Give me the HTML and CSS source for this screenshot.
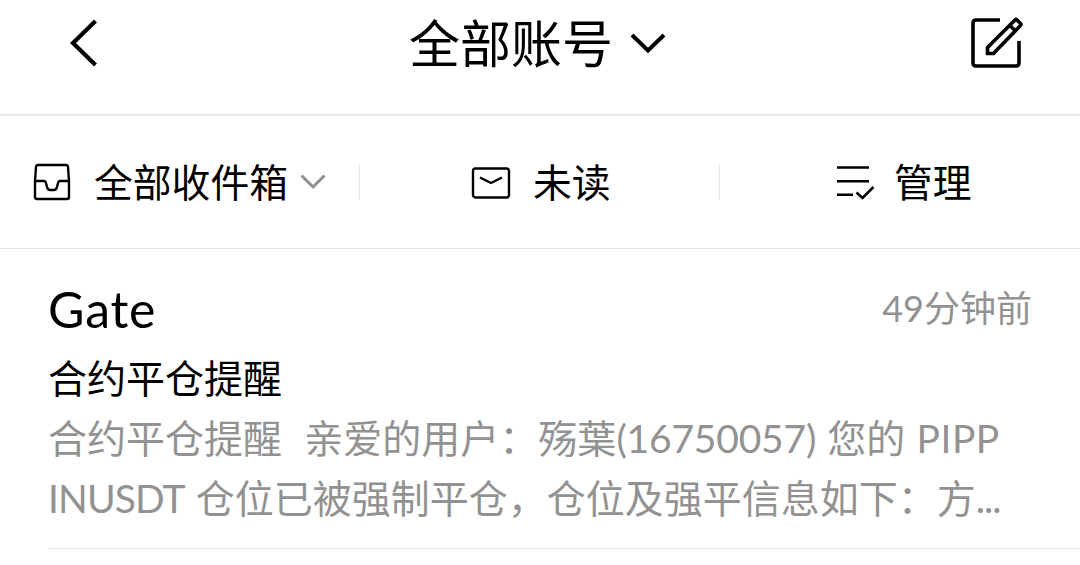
FILE: index.html
```html
<!DOCTYPE html>
<html lang="zh-CN">
<head>
    <meta charset="UTF-8">
    <meta name="viewport" content="width=device-width, initial-scale=1.0">
    <title>全部账号</title>
    <link rel="stylesheet" href="styles.css">
</head>
<body>
    <header class="header">
        <svg class="back-icon" viewBox="0 0 32 52">
            <path d="M28.5 4 L6 26 L28.5 48"/>
        </svg>
        <div class="account">
            <h1>全部账号</h1>
            <svg class="account-arrow" viewBox="0 0 38 24">
                <path d="M3 4 L19 19.5 L35 4"/>
            </svg>
        </div>
        <svg class="compose-icon" viewBox="0 0 56 56">
            <path d="M31 5 H7 Q4 5 4 8 V48 Q4 51 7 51 H47 Q50 51 50 48 V26"/>
            <path d="M18.500 38.500 V32.500 L46 5 Q47 4 48 5 L51.500 8.500 Q52.500 9.500 51.500 10.500 L24.500 38.500 Z M41 10.500 L46.500 16"/>
        </svg>
    </header>

    <nav class="toolbar">
        <div class="tool tool-inbox">
            <svg class="inbox-icon" viewBox="0 0 38 38">
                <path d="M5 2 H33 Q34.800 2 35 4 L36 18 V34 Q36 36 34 36 H4 Q2 36 2 34 V18 L3 4 Q3.200 2 5 2 Z M2 18 H11 Q12.500 18 13 20 L14 24 Q14.800 27 17 27 H21 Q23.200 27 24 24 L25 20 Q25.500 18 27 18 H36"/>
            </svg>
            <span>全部收件箱</span>
            <svg class="inbox-arrow" viewBox="0 0 26 18">
                <path d="M1.500 2.500 L13 14 L24.500 2.500"/>
            </svg>
        </div>
        <div class="tool tool-unread">
            <svg class="unread-icon" viewBox="0 0 40 34">
                <rect x="2" y="3.500" width="36" height="29" rx="2.500"/>
                <path d="M9 12.500 L20 18 L31 12.500"/>
            </svg>
            <span>未读</span>
        </div>
        <div class="tool tool-manage">
            <svg class="manage-icon" viewBox="0 0 38 36">
                <path d="M0 3.500 H32 M0 17.200 H32 M0 30.800 H16 M19.500 28.500 L25.500 34 L36.500 23"/>
            </svg>
            <span>管理</span>
        </div>
    </nav>

    <main class="mail-list">
        <article class="mail">
            <div class="mail-top">
                <h2 class="sender">Gate</h2>
                <time class="time">49分钟前</time>
            </div>
            <div class="subject">合约平仓提醒</div>
            <div class="preview">
                <p>合约平仓提醒&nbsp; 亲爱的用户：殇葉<span class="uid">(16750057)</span> 您的 <span class="pair">PIPP</span></p>
                <p><span class="symbol">INUSDT</span> 仓位已被强制平仓，仓位及强平信息如下：方<span class="dots">...</span></p>
            </div>
        </article>
    </main>
</body>
</html>
```

FILE: styles.css
```css
* {
    margin: 0;
    padding: 0;
    box-sizing: border-box;
}

body {
    font-family: Lato, 'Noto Sans CJK SC', sans-serif;
    background: #fff;
    color: #000;
    overflow: hidden;
}

svg {
    display: block;
    flex: none;
    fill: none;
    stroke: #000;
}

.header {
    height: 116px;
    padding: 0 55px 28px 67px;
    border-bottom: 2px solid #e9e9e9;
    display: flex;
    align-items: center;
    justify-content: space-between;
}

.back-icon {
    width: 32px;
    height: 52px;
    stroke-width: 4.2;
}

.account {
    padding-left: 8px;
    display: flex;
    align-items: center;
    gap: 16px;
}

.account h1 {
    padding-top: 2px;
    font-size: 51px;
    font-weight: 400;
    line-height: 74px;
}

.account-arrow {
    width: 38px;
    height: 24px;
    stroke-width: 4;
}

.compose-icon {
    width: 56px;
    height: 56px;
    stroke-width: 3.6;
}

.toolbar {
    height: 133px;
    border-bottom: 1px solid #e6e6e6;
    display: grid;
    grid-template-columns: repeat(3, 1fr);
    align-items: center;
    font-size: 38.8px;
    line-height: 56px;
}

.tool {
    height: 36px;
    display: flex;
    align-items: center;
    border-right: 1px solid #e6e6e6;
}

.tool:last-child {
    border-right: none;
}

.tool-inbox {
    padding-left: 33px;
}

.inbox-icon {
    width: 38px;
    height: 38px;
    margin-right: 23px;
    stroke-width: 2.4;
}

.inbox-arrow {
    width: 26px;
    height: 18px;
    margin-left: 12px;
    stroke: #8f8f8f;
    stroke-width: 3;
}

.tool-unread {
    padding-left: 111px;
}

.unread-icon {
    width: 40px;
    height: 34px;
    margin-right: 22px;
    stroke-width: 2.4;
}

.tool-manage {
    padding-left: 117px;
}

.manage-icon {
    width: 38px;
    height: 36px;
    margin-right: 19px;
    stroke-width: 2.6;
}

.mail {
    height: 300px;
    margin-left: 48px;
    padding-top: 24px;
    border-bottom: 1px solid #e6e6e6;
}

.mail-top {
    height: 75px;
    padding-right: 48px;
    display: flex;
    align-items: flex-start;
    justify-content: space-between;
}

.sender {
    font-size: 50px;
    font-weight: 400;
    line-height: 72px;
    letter-spacing: 0.8px;
}

.time {
    padding-top: 9px;
    color: #929292;
    font-size: 36px;
    line-height: 52px;
}

.subject {
    font-size: 39px;
    line-height: 60px;
}

.preview {
    color: #929292;
    font-size: 39px;
    line-height: 60px;
    white-space: nowrap;
    word-spacing: 1.2px;
}

.uid {
    letter-spacing: -0.2px;
}

.pair {
    letter-spacing: 0.5px;
}

.symbol {
    letter-spacing: -0.9px;
}

.dots {
    letter-spacing: -1px;
}
```
